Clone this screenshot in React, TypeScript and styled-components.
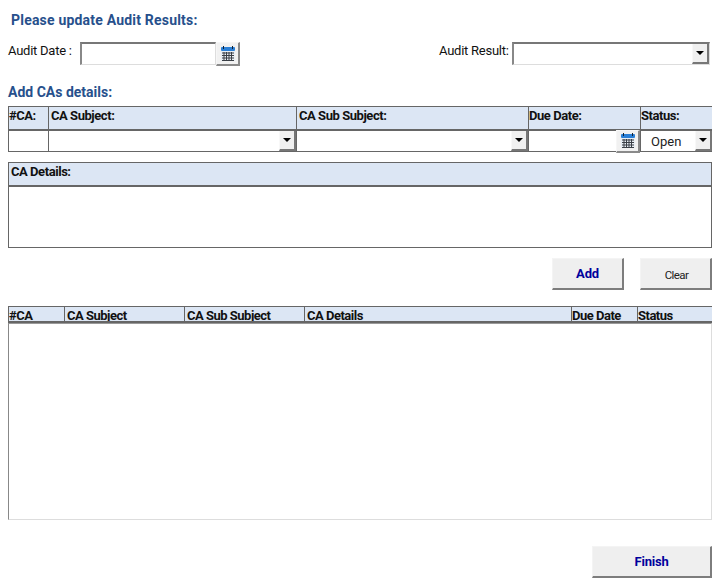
import React from 'react'
import styled, { createGlobalStyle } from 'styled-components'

const GlobalStyle = createGlobalStyle`
  html, body {
    margin: 0;
    padding: 0;
    background: #fff;
  }
  body {
    font-family: 'Roboto', 'Liberation Sans', sans-serif;
    color: #111;
  }
  * {
    box-sizing: border-box;
  }
`

const Page = styled.div`
  width: 721px;
  height: 586px;
  padding: 12px 9px 0 8px;
  overflow: hidden;
`

const Title = styled.h1`
  margin: 0 0 0 3px;
  height: 16px;
  font-size: 14px;
  line-height: 16px;
  font-weight: bold;
  letter-spacing: 0.2px;
  color: #27508c;
`

const AuditRow = styled.div`
  display: flex;
  justify-content: space-between;
  margin-top: 14px;
  padding-right: 2px;
  height: 23px;
`

const Field = styled.div`
  display: flex;
  align-items: flex-start;
`

const Label = styled.label<{ $width: number }>`
  width: ${p => p.$width}px;
  padding-top: 1px;
  font-size: 13px;
  line-height: 15px;
  letter-spacing: -0.25px;
  color: #111;
  white-space: nowrap;
`

const DateInput = styled.input<{ $width: number }>`
  display: block;
  width: ${p => p.$width}px;
  height: 23px;
  padding: 0;
  background: #fff;
  border-style: solid;
  border-width: 2px 1px 1px 2px;
  border-color: #777 #ddd #ddd #888;
  border-radius: 0;
  outline: none;
`

const CalendarButton = styled.div`
  display: flex;
  align-items: center;
  justify-content: center;
  flex: none;
  width: 24px;
  height: 24px;
  background: #f1f1f1;
  border-style: solid;
  border-width: 1px 2px 2px 1px;
  border-color: #f6f6f6 #8a8a8a #8a8a8a #f6f6f6;
`

const Combo = styled.div<{ $width: number }>`
  display: flex;
  justify-content: flex-end;
  width: ${p => p.$width}px;
  height: 23px;
  background: #fff;
  border-style: solid;
  border-width: 2px 1px 1px 2px;
  border-color: #777 #ddd #ddd #888;
`

const DropButton = styled.div`
  display: flex;
  align-items: center;
  justify-content: center;
  width: 17px;
  height: 100%;
  background: #f0f0f0;
  border-right: 2px solid #777;
  border-bottom: 2px solid #777;
  border-left: 1px solid #f8f8f8;
`

const Arrow = styled.span`
  width: 0;
  height: 0;
  border-left: 4px solid transparent;
  border-right: 4px solid transparent;
  border-top: 4px solid #000;
`

const SectionTitle = styled(Title)`
  margin: 20px 0 0;
  height: 15px;
  line-height: 15px;
  letter-spacing: 0;
`

const CaTable = styled.div`
  display: grid;
  grid-template-columns: 40px 248px 232px 112px 72px;
  grid-template-rows: 24px 20px;
  width: 704px;
  margin-top: 6px;
  border-top: 1px solid #666;
  border-bottom: 1px solid #666;
  border-right: 1px solid #666;
`

const HeadCell = styled.div<{ $pad?: number }>`
  padding: 1px 0 0 ${p => p.$pad ?? 1}px;
  background: #dce6f4;
  border-left: 1px solid #666;
  border-bottom: 2px solid #666;
  font-size: 13px;
  line-height: 15px;
  font-weight: bold;
  letter-spacing: -0.45px;
  color: #111;
  white-space: nowrap;
`

const BodyCell = styled.div`
  position: relative;
  display: flex;
  justify-content: flex-end;
  align-items: stretch;
  background: #fff;
  border-left: 1px solid #666;
`

const RowCalendar = styled(CalendarButton)`
  position: absolute;
  top: -1px;
  right: 0;
  height: 23px;
`

const StatusText = styled.span`
  flex: 1;
  padding-left: 10px;
  font-size: 13px;
  line-height: 22px;
  color: #222;
`

const DetailsBox = styled.div`
  width: 704px;
  height: 86px;
  margin-top: 10px;
  border: 1px solid #666;
`

const DetailsHead = styled(HeadCell)`
  height: 24px;
  border-left: 0;
`

const ButtonRow = styled.div`
  display: flex;
  justify-content: flex-end;
  gap: 16px;
  margin-top: 10px;
`

const ActionButton = styled.button<{ $width: number; $primary?: boolean }>`
  width: ${p => p.$width}px;
  height: 32px;
  padding: ${p => (p.$primary ? '0' : '2px 0 0 2px')};
  background: #efefef;
  border-style: solid;
  border-width: 1px 2px 2px 1px;
  border-color: #f4f4f4 #7d7d7d #7d7d7d #f4f4f4;
  border-radius: 0;
  font-family: inherit;
  font-size: ${p => (p.$primary ? 13 : 11.5)}px;
  font-weight: ${p => (p.$primary ? 'bold' : 'normal')};
  letter-spacing: ${p => (p.$primary ? -0.2 : -0.6)}px;
  color: ${p => (p.$primary ? '#00009c' : '#222')};
`

const ListHead = styled.div`
  display: grid;
  grid-template-columns: 56px 120px 120px 267px 66px 75px;
  width: 704px;
  height: 17px;
  margin-top: 16px;
  border-top: 1px solid #666;
  border-right: 1px solid #666;
`

const ListHeadCell = styled(HeadCell)`
  padding-top: 2px;
  line-height: 14px;
  letter-spacing: -0.5px;
  overflow: hidden;
`

const ListBody = styled.div`
  width: 704px;
  height: 197px;
  background: #fff;
  border-style: solid;
  border-width: 1px;
  border-color: #999 #ddd #ddd #888;
`

const FinishRow = styled.div`
  display: flex;
  justify-content: flex-end;
  margin-top: 26px;
`

const CalendarIcon = () => (
  <svg width="16" height="16" viewBox="0 0 16 16">
    <rect x="1" y="1" width="14" height="4" rx="1" fill="#2a7fd6" />
    <rect x="3" y="0" width="1" height="3" fill="#123" />
    <rect x="12" y="0" width="1" height="3" fill="#123" />
    <rect x="1" y="5" width="14" height="10" fill="#e8eef4" />
    <path
      d="M2 7h12M2 9.5h12M2 12h12M2 14.5h12M4 6v9M6.5 6v9M9 6v9M11.5 6v9"
      stroke="#3a3f46"
      strokeWidth="1"
      fill="none"
    />
  </svg>
)

const columns = ['#CA:', 'CA Subject:', 'CA Sub Subject:', 'Due Date:', 'Status:']
const listColumns = ['#CA', 'CA Subject', 'CA Sub Subject', 'CA Details', 'Due Date', 'Status']

const App = () => {
  return (
    <Page>
      <GlobalStyle />
      <Title>Please update Audit Results:</Title>
      <AuditRow>
        <Field>
          <Label $width={72}>Audit Date :</Label>
          <DateInput $width={136} />
          <CalendarButton>
            <CalendarIcon />
          </CalendarButton>
        </Field>
        <Field>
          <Label $width={73}>Audit Result:</Label>
          <Combo $width={198}>
            <DropButton>
              <Arrow />
            </DropButton>
          </Combo>
        </Field>
      </AuditRow>
      <SectionTitle as="h2">Add CAs details:</SectionTitle>
      <CaTable>
        {columns.map((c, i) => (
          <HeadCell key={c} $pad={i === 1 || i === 2 ? 2 : 0}>
            {c}
          </HeadCell>
        ))}
        <BodyCell />
        <BodyCell>
          <DropButton>
            <Arrow />
          </DropButton>
        </BodyCell>
        <BodyCell>
          <DropButton>
            <Arrow />
          </DropButton>
        </BodyCell>
        <BodyCell>
          <RowCalendar>
            <CalendarIcon />
          </RowCalendar>
        </BodyCell>
        <BodyCell>
          <StatusText>Open</StatusText>
          <DropButton>
            <Arrow />
          </DropButton>
        </BodyCell>
      </CaTable>
      <DetailsBox>
        <DetailsHead $pad={2}>CA Details:</DetailsHead>
      </DetailsBox>
      <ButtonRow>
        <ActionButton $width={72} $primary>
          Add
        </ActionButton>
        <ActionButton $width={72}>Clear</ActionButton>
      </ButtonRow>
      <ListHead>
        {listColumns.map((c, i) => (
          <ListHeadCell key={c} $pad={i === 0 || i > 3 ? 0 : 2}>
            {c}
          </ListHeadCell>
        ))}
      </ListHead>
      <ListBody />
      <FinishRow>
        <ActionButton $width={120} $primary>
          Finish
        </ActionButton>
      </FinishRow>
    </Page>
  )
}

export default App
